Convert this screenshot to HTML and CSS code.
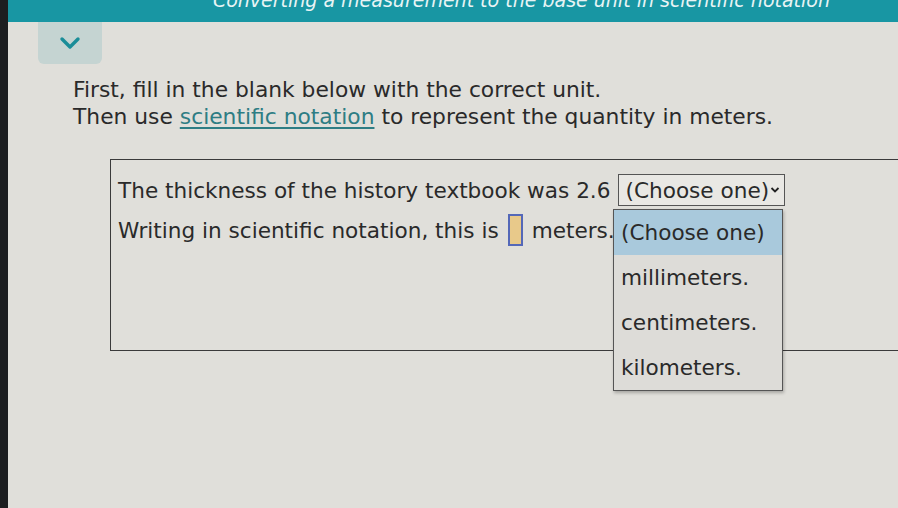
FILE: index.html
```html
<!DOCTYPE html>
<html>
<head>
<meta charset="utf-8">
<link rel="stylesheet" href="styles.css">
</head>
<body>
<div class="screen">
  <div class="topbar"><span class="topbar-text">Converting a measurement to the base unit in scientific notation</span></div>
  <div class="tab">
    <svg class="chev" width="22" height="14" viewBox="0 0 22 14"><path d="M3 3 L11 11 L19 3" fill="none" stroke="#1a8d98" stroke-width="3.4" stroke-linecap="round" stroke-linejoin="round"/></svg>
  </div>
  <div class="instructions">
    <p>First, fill in the blank below with the correct unit.</p>
    <p>Then use <span class="link">scientific notation</span> to represent the quantity in meters.</p>
  </div>
  <div class="panel">
    <div class="row row1">The thickness of the history textbook was 2.6<span class="select">(Choose one)<svg class="caret" width="10" height="8" viewBox="0 0 10 8"><path d="M1.5 2 L5 5.5 L8.5 2" fill="none" stroke="#222" stroke-width="1.8"/></svg></span></div>
    <div class="row row2">Writing in scientific notation, this is<span class="blank"></span>meters.</div>
    <div class="menu">
      <div class="opt sel">(Choose one)</div>
      <div class="opt">millimeters.</div>
      <div class="opt">centimeters.</div>
      <div class="opt">kilometers.</div>
    </div>
  </div>
</div>
</body>
</html>
```
FILE: styles.css
```css
html, body {
  margin: 0;
  padding: 0;
  width: 898px;
  height: 508px;
  overflow: hidden;
  background: #1c1e20;
}
.screen {
  margin-left: 8px;
  height: 508px;
  background: #e0dfda;
  font-family: "DejaVu Sans", Verdana, sans-serif;
  color: #2a2a2a;
  position: relative;
}
.topbar {
  height: 22px;
  background: #1896a3;
  overflow: hidden;
  position: relative;
}
.topbar-text {
  position: absolute;
  right: 68px;
  top: -11px;
  color: #e8f4f5;
  font-style: italic;
  font-size: 19px;
  white-space: nowrap;
}
.tab {
  margin-left: 30px;
  width: 64px;
  height: 42px;
  background: #c5d4d2;
  border-radius: 0 0 6px 6px;
  display: flex;
  align-items: center;
  justify-content: center;
}
.instructions {
  margin-left: 65px;
  margin-top: 12px;
  font-size: 21.8px;
  line-height: 27px;
}
.instructions p {
  margin: 0;
}
.link {
  color: #2e7d84;
  text-decoration: underline;
  text-underline-offset: 3px;
}
.panel {
  margin-left: 102px;
  margin-top: 29px;
  height: 190px;
  border: 1px solid #3a3a3a;
  border-right: none;
  position: relative;
  font-size: 21.6px;
}
.row {
  margin-left: 7px;
  display: flex;
  align-items: center;
  white-space: pre;
}
.row1 {
  margin-top: 15px;
  height: 30px;
}
.row2 {
  margin-top: 9px;
  height: 32px;
}
.select {
  margin-left: 8px;
  height: 30px;
  padding: 0 4px 0 6px;
  border: 1px solid #555;
  background: #e9e8e4;
  display: flex;
  align-items: center;
  gap: 1px;
}
.blank {
  display: inline-block;
  width: 11px;
  height: 28px;
  border: 2px solid #5468b8;
  background: #e8c98a;
  margin: 0 9px 0 9px;
}
.menu {
  position: absolute;
  left: 502px;
  top: 49px;
  width: 168px;
  border: 1px solid #555;
  background: #dddcd8;
  box-shadow: 1px 2px 3px rgba(0,0,0,0.25);
}
.opt {
  height: 45px;
  line-height: 45px;
  padding-left: 7px;
}
.opt.sel {
  background: #a9c9dc;
}
```
